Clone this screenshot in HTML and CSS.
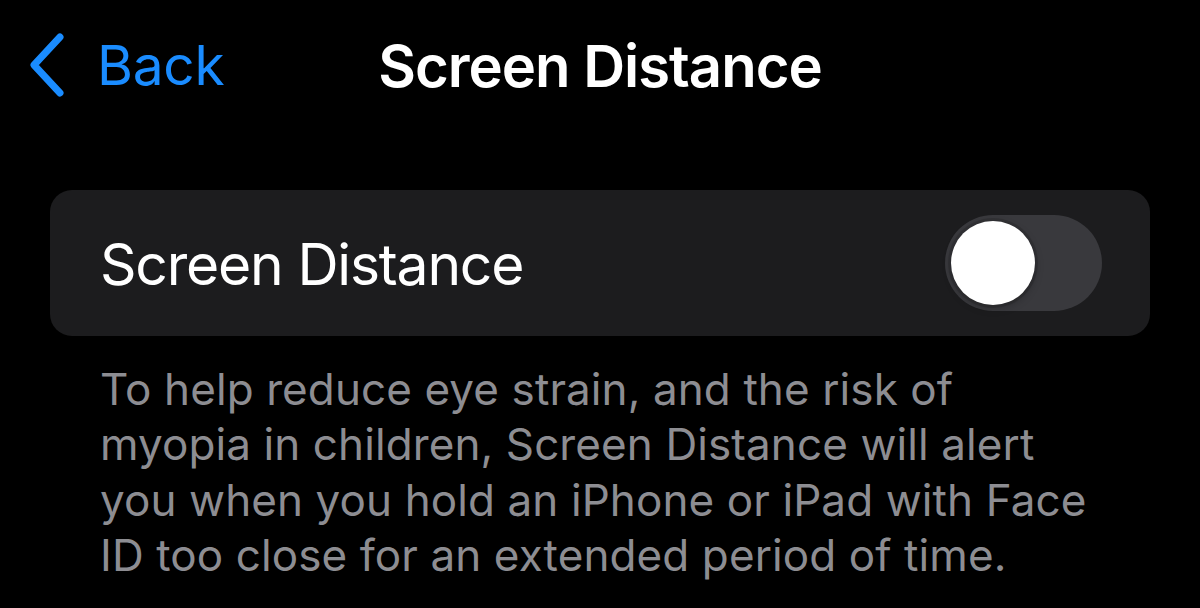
FILE: index.html
```html
<!DOCTYPE html>
<html lang="en">
<head>
<meta charset="utf-8">
<title>Screen Distance</title>
<link rel="stylesheet" href="styles.css">
</head>
<body>
  <header class="nav">
    <a class="nav-back" href="#">
      <svg class="chevron" viewBox="0 0 40 66" width="40" height="66" aria-hidden="true">
        <path d="M33 5 L7 33 L33 61" fill="none" stroke="currentColor" stroke-width="7" stroke-linecap="round" stroke-linejoin="round"/>
      </svg>
      <span>Back</span>
    </a>
    <h1 class="nav-title">Screen Distance</h1>
  </header>

  <main class="content">
    <section class="group">
      <div class="cell">
        <span class="cell-label">Screen Distance</span>
        <span class="switch" role="switch" aria-checked="false"><span class="knob"></span></span>
      </div>
    </section>
    <p class="footnote">To help reduce eye strain, and the risk of<br>myopia in children, Screen Distance will alert<br>you when you hold an iPhone or iPad with Face<br>ID too close for an extended period of time.</p>
  </main>
</body>
</html>
```

FILE: styles.css
```css
* { box-sizing: border-box; }

html, body {
  margin: 0;
  background: #000;
  color: #fff;
  font-family: Inter, "Noto Sans", "Liberation Sans", sans-serif;
  -webkit-font-smoothing: antialiased;
}

.nav {
  position: relative;
  height: 134px;
  display: flex;
  justify-content: center;
}

.nav-back {
  position: absolute;
  left: 27px;
  top: 32px;
  display: flex;
  align-items: center;
  gap: 30px;
  color: #1a8cff;
  text-decoration: none;
  font-size: 55px;
  letter-spacing: -0.3px;
}

.chevron { display: block; }

.nav-title {
  margin: 0;
  padding-top: 31px;
  font-size: 58px;
  font-weight: 600;
  letter-spacing: -1px;
  line-height: 70px;
}

.content {
  padding: 56px 50px 0;
}

.group {
  background: #1c1c1e;
  border-radius: 22px;
}

.cell {
  height: 146px;
  display: flex;
  align-items: center;
  justify-content: space-between;
  padding: 0 48px 0 50px;
}

.cell-label {
  font-size: 57px;
  letter-spacing: -1.2px;
  padding-top: 2px;
}

.switch {
  width: 157px;
  height: 96px;
  border-radius: 48px;
  background: #39393d;
  padding: 6px;
  display: flex;
  align-items: center;
}

.knob {
  width: 84px;
  height: 84px;
  border-radius: 50%;
  background: #fff;
  box-shadow: 0 0 0 3px rgba(0, 0, 0, 0.12), 0 3px 8px rgba(0, 0, 0, 0.25);
}

.footnote {
  margin: 26px 0 0;
  padding: 0 50px;
  color: #8d8d92;
  font-size: 44px;
  line-height: 55.33px;
  letter-spacing: 0.1px;
}
```
